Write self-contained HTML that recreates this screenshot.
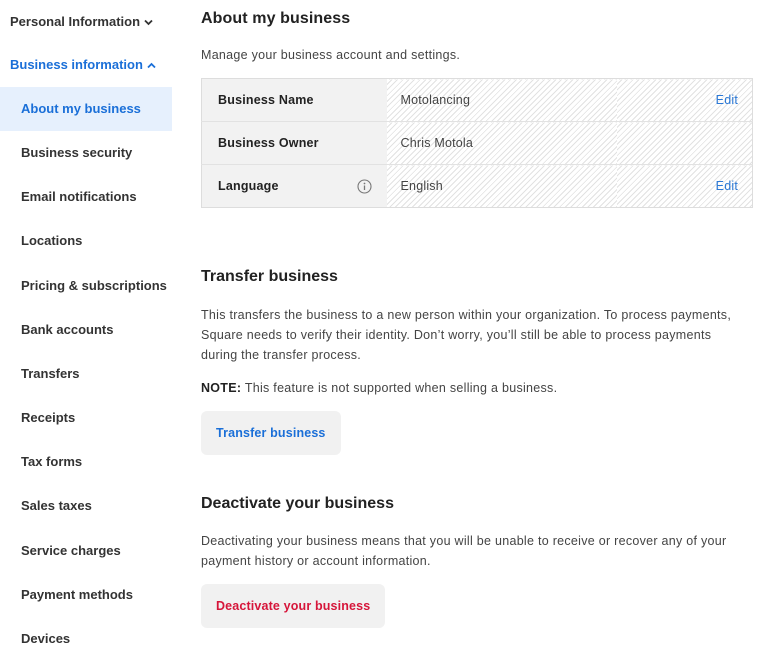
<!DOCTYPE html>
<html><head><meta charset="utf-8">
<style>
*{margin:0;padding:0;box-sizing:border-box}
body{width:768px;height:666px;overflow:hidden;background:#fff;font-family:"Liberation Sans",Arial,sans-serif;color:#1f1f1f;position:relative}
.nav{position:absolute;left:0;top:0;width:172px}
.nav div{position:absolute;height:44px;line-height:44px;font-size:13px;font-weight:bold;color:#333;white-space:nowrap}
.sub{left:0;width:172px;padding-left:21px}
.act{background:#e6f0fd;color:#1a6fd8 !important}
.main{position:absolute;left:201px;top:0;width:560px}
h1{position:absolute;top:10px;font-size:16px;font-weight:bold;color:#222;letter-spacing:0.1px}
h2{position:absolute;font-size:16px;font-weight:bold;color:#222}
p{position:absolute;font-size:12.5px;color:#444;line-height:20px;width:560px;letter-spacing:0.28px;white-space:nowrap}
table{position:absolute;top:78px;left:0;width:552px;border-collapse:collapse;border:1px solid #ddd;font-size:12.5px;letter-spacing:0.2px}
td{height:43px;border-top:1px solid #e2e2e2}
td.l{width:185px;background:#f2f2f2;font-weight:bold;padding-left:16px;color:#222;position:relative}
td.v{padding-left:14px;color:#444;background:repeating-linear-gradient(135deg,#fff 0,#fff 3px,#e2e2e2 3px,#e2e2e2 4px)}
td.e{text-align:right;padding-right:14px;color:#2a78d6}
.btn{position:absolute;height:44px;line-height:44px;background:#f1f1f1;border-radius:6px;font-size:12.5px;font-weight:bold;padding:0 15px;letter-spacing:0.15px}
</style></head><body>
<div class="nav">
<div style="top:0;left:10px">Personal Information <svg width="9" height="7" viewBox="0 0 9 7"><path d="M1 1.5l3.5 3.5 3.5-3.5" stroke="#333" stroke-width="1.8" fill="none"/></svg></div>
<div style="top:43px;left:10px;color:#1a6fd8">Business information <svg width="9" height="7" viewBox="0 0 9 7"><path d="M1 5.5l3.5-3.5 3.5 3.5" stroke="#1a6fd8" stroke-width="1.8" fill="none"/></svg></div>
<div class="sub act" style="top:87px">About my business</div>
<div class="sub" style="top:131px">Business security</div>
<div class="sub" style="top:175px">Email notifications</div>
<div class="sub" style="top:219px">Locations</div>
<div class="sub" style="top:264px">Pricing &amp; subscriptions</div>
<div class="sub" style="top:308px">Bank accounts</div>
<div class="sub" style="top:352px">Transfers</div>
<div class="sub" style="top:396px">Receipts</div>
<div class="sub" style="top:440px">Tax forms</div>
<div class="sub" style="top:484px">Sales taxes</div>
<div class="sub" style="top:529px">Service charges</div>
<div class="sub" style="top:573px">Payment methods</div>
<div class="sub" style="top:617px">Devices</div>
</div>
<div class="main">
<h1>About my business</h1>
<p style="top:45px">Manage your business account and settings.</p>
<table>
<tr><td class="l" style="border-top:0">Business Name</td><td class="v" style="border-top:0">Motolancing</td><td class="v e" style="border-top:0">Edit</td></tr>
<tr><td class="l">Business Owner</td><td class="v">Chris Motola</td><td class="v e"></td></tr>
<tr><td class="l">Language<svg style="position:absolute;left:155px;top:14px" width="15" height="15" viewBox="0 0 15 15"><circle cx="7.5" cy="7.5" r="6.5" stroke="#777" stroke-width="1.1" fill="none"/><circle cx="7.5" cy="4.5" r="0.9" fill="#777"/><path d="M7.5 6.5v4.5" stroke="#777" stroke-width="1.3"/></svg></td><td class="v">English</td><td class="v e">Edit</td></tr>
</table>
<h2 style="top:268px">Transfer business</h2>
<p style="top:305px">This transfers the business to a new person within your organization. To process payments,<br>Square needs to verify their identity. Don’t worry, you’ll still be able to process payments<br>during the transfer process.</p>
<p style="top:378px"><b style="color:#222">NOTE:</b> This feature is not supported when selling a business.</p>
<div class="btn" style="top:411px;color:#1a6fd8">Transfer business</div>
<h2 style="top:495px">Deactivate your business</h2>
<p style="top:531px">Deactivating your business means that you will be unable to receive or recover any of your<br>payment history or account information.</p>
<div class="btn" style="top:584px;color:#d6153a">Deactivate your business</div>
</div>
</body></html>
